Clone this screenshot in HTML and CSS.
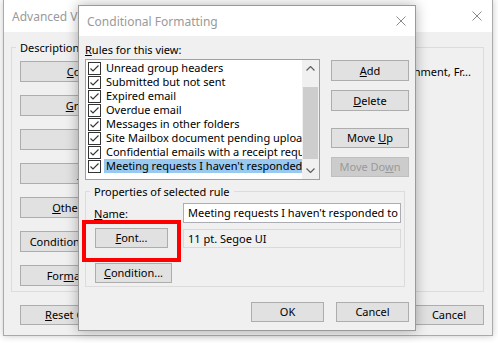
FILE: index.html
```html
<!DOCTYPE html>
<html lang="en">
<head>
  <meta charset="UTF-8">
  <meta name="viewport" content="width=device-width, initial-scale=1.0">
  <title>Conditional Formatting</title>
  <link rel="stylesheet" href="styles.css">
</head>
<body>
  <div class="desktop">

    <!-- Advanced View Settings (inactive, behind) -->
    <div class="window window-back">
      <div class="titlebar">
        <span class="title">Advanced View Settings: Compact</span>
        <svg class="close-icon" width="10" height="10" viewBox="0 0 10 10"><path d="M0.5 0.5 L9.5 9.5 M9.5 0.5 L0.5 9.5"/></svg>
      </div>
      <div class="window-body">
        <fieldset class="group group-description">
          <legend>Description</legend>
          <div class="setting-row">
            <button class="btn btn-wide"><u>C</u>olumns...</button>
            <span class="setting-value">Importance, Reminder, Icon, Attachment, Fr...</span>
          </div>
          <div class="setting-row"><button class="btn btn-wide"><u>G</u>roup By...</button></div>
          <div class="setting-row"><button class="btn btn-wide"><u>S</u>ort...</button></div>
          <div class="setting-row"><button class="btn btn-wide"><u>F</u>ilter...</button></div>
          <div class="setting-row"><button class="btn btn-wide"><u>O</u>ther Settings...</button></div>
          <div class="setting-row"><button class="btn btn-wide">Conditional Formatting...</button></div>
          <div class="setting-row"><button class="btn btn-wide">For<u>m</u>at Columns...</button></div>
        </fieldset>
        <div class="dialog-footer back-footer">
          <button class="btn btn-wide btn-short"><u>R</u>eset Current View</button>
          <div class="footer-buttons">
            <button class="btn btn-back-footer">OK</button>
            <button class="btn btn-back-footer">Cancel</button>
          </div>
        </div>
      </div>
    </div>

    <!-- Conditional Formatting dialog -->
    <div class="window window-front">
      <div class="titlebar">
        <span class="title">Conditional Formatting</span>
        <svg class="close-icon" width="10" height="10" viewBox="0 0 10 10"><path d="M0.5 0.5 L9.5 9.5 M9.5 0.5 L0.5 9.5"/></svg>
      </div>
      <div class="window-body">
        <div class="field-label"><u>R</u>ules for this view:</div>
        <div class="rules-row">
          <div class="listbox">
            <ul class="rule-list">
              <li class="rule"><span class="check"><svg width="11" height="11" viewBox="0 0 11 11"><path d="M1.5 5.5 L4 8 L9.5 2.5"/></svg></span><span class="rule-name">Unread group headers</span></li>
              <li class="rule"><span class="check"><svg width="11" height="11" viewBox="0 0 11 11"><path d="M1.5 5.5 L4 8 L9.5 2.5"/></svg></span><span class="rule-name">Submitted but not sent</span></li>
              <li class="rule"><span class="check"><svg width="11" height="11" viewBox="0 0 11 11"><path d="M1.5 5.5 L4 8 L9.5 2.5"/></svg></span><span class="rule-name">Expired email</span></li>
              <li class="rule"><span class="check"><svg width="11" height="11" viewBox="0 0 11 11"><path d="M1.5 5.5 L4 8 L9.5 2.5"/></svg></span><span class="rule-name">Overdue email</span></li>
              <li class="rule"><span class="check"><svg width="11" height="11" viewBox="0 0 11 11"><path d="M1.5 5.5 L4 8 L9.5 2.5"/></svg></span><span class="rule-name">Messages in other folders</span></li>
              <li class="rule"><span class="check"><svg width="11" height="11" viewBox="0 0 11 11"><path d="M1.5 5.5 L4 8 L9.5 2.5"/></svg></span><span class="rule-name">Site Mailbox document pending upload</span></li>
              <li class="rule"><span class="check"><svg width="11" height="11" viewBox="0 0 11 11"><path d="M1.5 5.5 L4 8 L9.5 2.5"/></svg></span><span class="rule-name">Confidential emails with a receipt request</span></li>
              <li class="rule selected"><span class="check"><svg width="11" height="11" viewBox="0 0 11 11"><path d="M1.5 5.5 L4 8 L9.5 2.5"/></svg></span><span class="rule-name">Meeting requests I haven't responded to</span></li>
            </ul>
            <div class="scrollbar">
              <div class="scroll-arrow"><svg width="9" height="5" viewBox="0 0 9 5"><path d="M0.5 4.5 L4.5 0.5 L8.5 4.5"/></svg></div>
              <div class="scroll-track"><div class="scroll-thumb"></div></div>
              <div class="scroll-arrow"><svg width="9" height="5" viewBox="0 0 9 5"><path d="M0.5 0.5 L4.5 4.5 L8.5 0.5"/></svg></div>
            </div>
          </div>
          <div class="side-buttons">
            <button class="btn btn-side"><u>A</u>dd</button>
            <button class="btn btn-side"><u>D</u>elete</button>
            <button class="btn btn-side btn-gap btn-short">Move <u>U</u>p</button>
            <button class="btn btn-side btn-short" disabled>Move Do<u>w</u>n</button>
          </div>
        </div>

        <fieldset class="group group-props">
          <legend>Properties of selected rule</legend>
          <div class="prop-row">
            <div class="prop-cell"><u>N</u>ame:</div>
            <div class="text-input">Meeting requests I haven't responded to</div>
          </div>
          <div class="prop-row">
            <div class="prop-cell"><button class="btn btn-font btn-short"><u>F</u>ont...</button></div>
            <div class="text-input readonly">11 pt. Segoe UI</div>
          </div>
          <div class="prop-row cond-row">
            <div class="prop-cell"><button class="btn btn-cond btn-short"><u>C</u>ondition...</button></div>
          </div>
        </fieldset>

        <div class="dialog-footer front-footer">
          <button class="btn btn-footer btn-short">OK</button>
          <button class="btn btn-footer btn-short">Cancel</button>
        </div>
      </div>

      <!-- annotation round the Font button -->
      <div class="callout"></div>
    </div>

  </div>
</body>
</html>
```

FILE: styles.css
```css
* {
  box-sizing: border-box;
}

body {
  margin: 0;
  width: 498px;
  height: 343px;
  overflow: hidden;
  background: #fff;
  font-family: "Noto Sans", "Open Sans", sans-serif;
  font-size: 11px;
  line-height: 15px;
  color: #000;
}

.desktop {
  position: relative;
  width: 498px;
  height: 343px;
}

/* Windows */
.window {
  position: absolute;
  display: flex;
  flex-direction: column;
  background: #f0f0f0;
  border: 1px solid #aaa;
}

.window-back {
  left: 3px;
  top: -1px;
  width: 490px;
  height: 337px;
  box-shadow: 0 0 7px rgba(0, 0, 0, 0.22);
}

.window-front {
  left: 78px;
  top: 5px;
  width: 338px;
  height: 326px;
  border-color: #9a9a9a;
  box-shadow: 0 0 12px rgba(0, 0, 0, 0.3);
}

.titlebar {
  flex: none;
  display: flex;
  align-items: center;
  justify-content: space-between;
  background: #fff;
  overflow: hidden;
}

.window-back .titlebar {
  height: 32px;
  padding: 0 10px 0 8px;
}

.window-front .titlebar {
  height: 30px;
  padding: 0 9px 0 8px;
}

.title {
  font-size: 12px;
  color: #9a9a9a;
  white-space: nowrap;
}

.close-icon {
  flex: none;
  stroke: #8a8a8a;
  stroke-width: 1;
  fill: none;
}

.window-body {
  flex: 1;
  display: flex;
  flex-direction: column;
}

.window-back .window-body {
  padding: 8px 8px 0 7px;
}

.window-front .window-body {
  padding: 6px 6px 8px;
}

/* Buttons */
.btn {
  display: block;
  height: 21px;
  padding: 0;
  margin: 0;
  font: inherit;
  line-height: 19px;
  text-align: center;
  color: #000;
  background: #e1e1e1;
  border: 1px solid #adadad;
  white-space: nowrap;
}

.btn-short {
  height: 20px;
  line-height: 18px;
}

.btn:disabled {
  background: #ccc;
  border-color: #bfbfbf;
  color: #9a9a9a;
}

.btn-wide {
  width: 148px;
}

.btn-back-footer {
  width: 70px;
  height: 20px;
  line-height: 18px;
}

.btn-side {
  width: 78px;
}

.btn-side + .btn-side {
  margin-top: 9px;
}

.btn-side.btn-gap {
  margin-top: 17px;
}

.btn-font {
  width: 73px;
  margin-left: 1px;
}

.btn-cond {
  width: 77px;
  margin-left: 1px;
}

.btn-footer {
  width: 73px;
}

/* Group boxes */
.group {
  margin: 0;
  border: 1px solid #dcdcdc;
  min-width: 0;
}

.group legend {
  padding: 0 4px;
  margin-left: -4px;
  line-height: 15px;
}

.group-description {
  padding: 6px 8px 5px 8px;
}

.setting-row {
  display: flex;
  align-items: center;
}

.setting-row + .setting-row {
  margin-top: 13px;
}

.setting-value {
  flex: 1;
  text-align: right;
  padding-right: 4px;
  white-space: nowrap;
  overflow: hidden;
}

.dialog-footer {
  display: flex;
}

.back-footer {
  margin-top: 13px;
  padding-left: 9px;
  justify-content: space-between;
}

.footer-buttons {
  display: flex;
  gap: 6px;
}

/* Conditional Formatting contents */
.field-label {
  margin-bottom: 2px;
}

.rules-row {
  display: flex;
  justify-content: space-between;
}

.listbox {
  display: flex;
  width: 235px;
  height: 121px;
  background: #fff;
  border: 1px solid #a0a0a0;
}

.rule-list {
  flex: 1;
  min-width: 0;
  margin: 0;
  padding: 1px 0 0 2px;
  list-style: none;
}

.rule {
  display: flex;
  align-items: center;
  height: 14px;
}

.check {
  flex: none;
  display: flex;
  align-items: center;
  justify-content: center;
  width: 13px;
  height: 13px;
  border: 1px solid #333;
  background: #fff;
}

.check svg {
  stroke: #333;
  stroke-width: 1.1;
  fill: none;
}

.rule-name {
  flex: 1;
  min-width: 0;
  margin-left: 3px;
  padding: 0 2px;
  height: 14px;
  line-height: 14px;
  white-space: nowrap;
  overflow: hidden;
}

.rule.selected .rule-name {
  background: #99c9ef;
}

.scrollbar {
  flex: none;
  display: flex;
  flex-direction: column;
  width: 17px;
  background: #f0f0f0;
}

.scroll-arrow {
  flex: none;
  display: flex;
  align-items: center;
  justify-content: center;
  height: 17px;
}

.scroll-arrow svg {
  stroke: #606060;
  stroke-width: 1.2;
  fill: none;
}

.scroll-track {
  flex: 1;
  padding: 10px 1px 2px;
}

.scroll-thumb {
  height: 72px;
  background: #cdcdcd;
}

.side-buttons {
  display: flex;
  flex-direction: column;
  padding-top: 1px;
}

.group-props {
  margin: 4px 4px 0 0;
  padding: 4px 3px 3px 8px;
}

.prop-row {
  display: flex;
  align-items: center;
  height: 20px;
}

.prop-row + .prop-row {
  margin-top: 5px;
}

.prop-row.cond-row {
  margin-top: 15px;
}

.prop-cell {
  flex: none;
  width: 89px;
}

.text-input {
  flex: 1;
  height: 20px;
  padding: 0 4px;
  line-height: 18px;
  background: #fff;
  border: 1px solid #abadb3;
  white-space: nowrap;
  overflow: hidden;
}

.text-input.readonly {
  height: 19px;
  line-height: 17px;
  background: #f0f0f0;
  border-color: #d9d9d9;
}

.front-footer {
  margin-top: 15px;
  justify-content: flex-end;
  gap: 12px;
}

/* red annotation frame */
.callout {
  position: absolute;
  left: 3px;
  top: 214px;
  width: 99px;
  height: 42px;
  border: 4px solid #f00;
}
```
